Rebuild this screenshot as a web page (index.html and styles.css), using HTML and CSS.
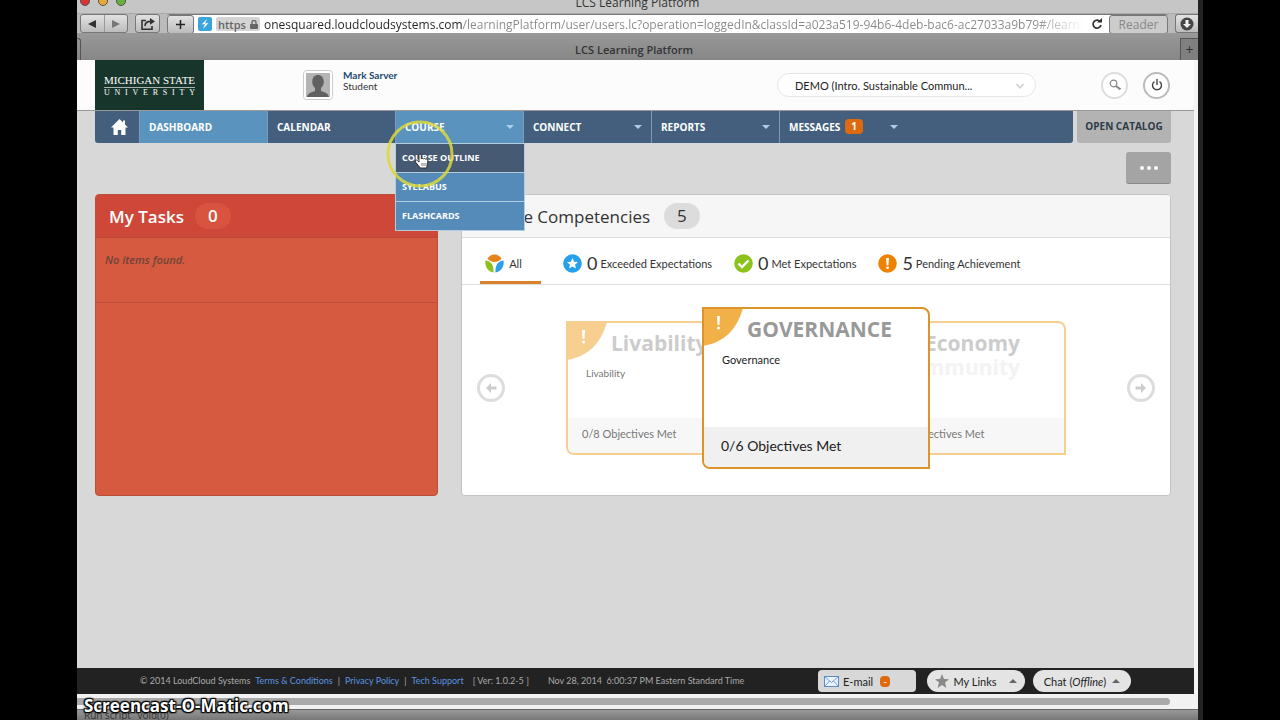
FILE: index.html
```
<!DOCTYPE html>
<html lang="en">
<head>
  <meta charset="UTF-8">
  <title>LCS Learning Platform</title>
  <link rel="stylesheet" href="styles.css">
</head>
<body>
  <div class="window">

    <!-- Browser chrome -->
    <div class="titlebar">
      <div class="lights">
        <span class="light red"></span>
        <span class="light yellow"></span>
        <span class="light green"></span>
      </div>
      <span class="window-title">LCS Learning Platform</span>
    </div>
    <div class="toolbar">
      <div class="history">
        <button aria-label="Back"><svg width="8" height="8" viewBox="0 0 8 8"><path d="M8 0v8L0 4z" fill="#333"/></svg></button>
        <button aria-label="Forward"><svg width="8" height="8" viewBox="0 0 8 8"><path d="M0 0v8l8-4z" fill="#777"/></svg></button>
      </div>
      <button class="tool-button" aria-label="Share">
        <svg width="14" height="12" viewBox="0 0 14 12" fill="none" stroke="#333" stroke-width="1.6"><path d="M5 2.500H1v8.700h10V8"/><path d="M4 8c0-3 2-4.600 6-4.600"/><path d="M9 0l5 3.400-5 3.400z" fill="#333" stroke="none"/></svg>
      </button>
      <div class="address">
        <button class="add-button" aria-label="Add bookmark"><svg width="11" height="11" viewBox="0 0 11 11"><path d="M5.500 1v9M1 5.500h9" stroke="#222" stroke-width="1.500"/></svg></button>
        <svg class="favicon" width="14" height="14" viewBox="0 0 14 14"><rect width="14" height="14" rx="2" fill="#3aa5dc"/><path d="M9 2L3.500 7.500 7 7 5 12l5.500-6L7 6.500z" fill="#fff"/></svg>
        <span class="secure">https
          <svg width="8" height="9" viewBox="0 0 8 9"><rect y="4" width="8" height="5" rx="1" fill="#666"/><path d="M2 4V2.500a2 2 0 0 1 4 0V4" fill="none" stroke="#666" stroke-width="1.300"/></svg>
        </span>
        <input class="url" type="text" aria-label="Address" value="onesquared.loudcloudsystems.com/learningPlatform/user/users.lc?operation=loggedIn&amp;classId=a023a519-94b6-4deb-bac6-ac27033a9b79#/learningPlatform">
        <button class="reload" aria-label="Reload"><svg width="12" height="12" viewBox="0 0 12 12"><path d="M9.500 4A4 4 0 1 0 10 7" fill="none" stroke="#333" stroke-width="1.700"/><path d="M6 4.600h5V0z" fill="#333"/></svg></button>
        <button class="reader">Reader</button>
      </div>
      <button class="downloads" aria-label="Downloads"><svg width="14" height="14" viewBox="0 0 14 14"><circle cx="7" cy="7" r="6.500" fill="#444"/><path d="M5.500 3h3v4H11l-4 4-4-4h2.500z" fill="#eee"/></svg></button>
    </div>
    <div class="tabbar">
      <span class="tab-edge"></span>
      <span class="tab-title">LCS Learning Platform</span>
      <button class="new-tab" aria-label="New tab">+</button>
    </div>

    <!-- Web page -->
    <div class="page">
      <header class="header">
        <a class="logo" href="#"><span class="logo-top">MICHIGAN STATE</span><span class="logo-bottom"><span>U</span><span>N</span><span>I</span><span>V</span><span>E</span><span>R</span><span>S</span><span>I</span><span>T</span><span>Y</span></span></a>
        <div class="user">
          <svg class="avatar" width="30" height="30" viewBox="0 0 30 30"><rect x=".5" y=".5" width="29" height="29" rx="3" fill="#fff" stroke="#ccc"/><rect x="3" y="3" width="24" height="24" fill="#b4b4b4"/><path d="M4 27c1-4 4-4.500 8-6v-3c-2-2-3-4-2.700-7C9.500 7 12 5 15 5s5.500 2 5.700 6c.3 3-.7 5-2.700 7v3c4 1.500 7 2 8 6z" fill="#606060"/></svg>
          <div class="user-text">
            <a class="user-name" href="#">Mark Sarver</a>
            <span class="user-role">Student</span>
          </div>
        </div>
        <div class="course-picker">
          <select aria-label="Course"><option>DEMO (Intro. Sustainable Commun...</option></select>
          <svg width="8" height="6" viewBox="0 0 8 6"><path d="M.5 1L4 5l3.500-4" fill="none" stroke="#ccc" stroke-width="1.200"/></svg>
        </div>
        <button class="round search" aria-label="Search"><svg width="12" height="12" viewBox="0 0 12 12" fill="none" stroke="#888"><circle cx="4.500" cy="4.500" r="3.300" stroke-width="1.200"/><path d="M7 7l4.500 3.500" stroke-width="2"/></svg></button>
        <button class="round power" aria-label="Log out"><svg width="12" height="12" viewBox="0 0 12 12" fill="none" stroke="#444" stroke-width="1.400"><path d="M3.500 2.500a4.500 4.500 0 1 0 5 0M6 0v6"/></svg></button>
      </header>

      <div class="nav-row">
        <nav class="nav">
          <a class="nav-home" href="#" aria-label="Home"><svg width="17" height="16" viewBox="0 0 17 16"><path d="M8.500 0L0 8.500h2.500V16h4.300v-5h3.400v5h4.300V8.500H17l-3-3V1.500h-2v2z" fill="#fff"/></svg></a>
          <a class="nav-item active" href="#">DASHBOARD</a>
          <a class="nav-item" href="#">CALENDAR</a>
          <div class="nav-item active has-menu">
            <a href="#">COURSE</a><span class="caret"></span>
            <div class="dropdown">
              <a class="hover" href="#">COURSE OUTLINE</a>
              <a href="#">SYLLABUS</a>
              <a href="#">FLASHCARDS</a>
            </div>
            <!-- Click ring and hand cursor -->
            <svg class="pointer" width="70" height="70" viewBox="0 0 70 70"><circle cx="35" cy="35" r="32" fill="none" stroke="#dcd83c" stroke-opacity=".85" stroke-width="3"/><path d="M34.500 48l-4-5c-1-1.500.7-2.500 1.800-1.500l1.700 1.500v-6.500c0-1.800 2.300-1.800 2.300 0V40c.5-1 2-.8 2.200 0 .6-.8 2-.6 2.200.3.700-.6 2-.2 2 .9V45l-1.200 4h-6z" fill="#fff" stroke="#222" stroke-width=".9"/><path d="M37 44v3M39 44v3M41 44v3" stroke="#222" stroke-width=".6"/></svg>
          </div>
          <a class="nav-item" href="#">CONNECT<span class="caret"></span></a>
          <a class="nav-item" href="#">REPORTS<span class="caret"></span></a>
          <a class="nav-item" href="#">MESSAGES<span class="badge">1</span><span class="caret"></span></a>
        </nav>
        <a class="catalog" href="#">OPEN CATALOG</a>
      </div>

      <main class="main">
        <div class="actions">
          <button class="more" aria-label="More"><i></i><i></i><i></i></button>
        </div>
        <div class="panels">
          <section class="panel tasks">
            <h2 class="panel-head">My Tasks <span class="count">0</span></h2>
            <p class="empty">No items found.</p>
          </section>

          <section class="panel competencies">
            <h2 class="panel-head">Course Competencies <span class="count">5</span></h2>
            <div class="filters">
              <button class="filter selected">
                <svg width="19" height="19" viewBox="0 0 19 19"><path d="M2.500 4.500C6-.8 13-.8 16.500 4.500 14 9 5 9 2.500 4.500z" fill="#e5841c"/><path d="M.5 6.500c5 .5 8.500 4 8 12C2.500 18-.5 12 .5 6.500z" fill="#8cc21c"/><path d="M18.500 6.500c-5 .5-8.500 4-8 12C16.500 18 19.500 12 18.500 6.500z" fill="#2c9fe8"/></svg>
                <span>All</span>
              </button>
              <button class="filter">
                <svg width="19" height="19" viewBox="0 0 19 19"><circle cx="9.500" cy="9.500" r="9.300" fill="#27a0ea"/><path d="M9.500 4l1.600 3.800 4 .3-3.100 2.600 1 3.900-3.500-2.100L6 14.600l1-3.900-3.100-2.600 4-.3z" fill="#fff"/></svg>
                <b>0</b><span>Exceeded Expectations</span>
              </button>
              <button class="filter">
                <svg width="19" height="19" viewBox="0 0 19 19"><circle cx="9.500" cy="9.500" r="9.300" fill="#8cc21c"/><path d="M4.500 9.500l3.500 3.500 6.500-6.500" fill="none" stroke="#fff" stroke-width="2.400"/></svg>
                <b>0</b><span>Met Expectations</span>
              </button>
              <button class="filter">
                <svg width="19" height="19" viewBox="0 0 19 19"><circle cx="9.500" cy="9.500" r="9.300" fill="#ee8100"/><path d="M8 4h3l-.6 7.500H8.600z" fill="#fff"/><circle cx="9.500" cy="13.800" r="1.400" fill="#fff"/></svg>
                <b>5</b><span>Pending Achievement</span>
              </button>
            </div>

            <div class="carousel">
              <button class="arrow" aria-label="Previous"><svg width="28" height="28" viewBox="0 0 28 28"><circle cx="14" cy="14" r="12.500" fill="none" stroke="#ddd" stroke-width="3"/><path d="M14 9v3.500h5.500v3H14V19l-5-5z" fill="#ccc"/></svg></button>
              <div class="cards">
                <article class="card side">
                  <svg class="corner" width="40" height="38" viewBox="0 0 40 38"><path d="M0 0h40Q31 33 0 38z" fill="#f2b048"/><path d="M15 8h3l-.6 9h-1.800z" fill="#fff"/><circle cx="16.500" cy="20" r="1.500" fill="#fff"/></svg>
                  <h3>Livability</h3>
                  <p>Livability</p>
                  <footer>0/8 Objectives Met</footer>
                </article>
                <article class="card front">
                  <svg class="corner" width="40" height="38" viewBox="0 0 40 38"><path d="M0 0h40Q31 33 0 38z" fill="#f2b048"/><path d="M14 8h3l-.6 9h-1.800z" fill="#fff"/><circle cx="15.500" cy="20" r="1.500" fill="#fff"/></svg>
                  <h3>GOVERNANCE</h3>
                  <p>Governance</p>
                  <footer>0/6 Objectives Met</footer>
                </article>
                <article class="card side last">
                  <h3>Economy<span class="ghost">Community</span></h3>
                  <footer>0/5 Objectives Met</footer>
                </article>
              </div>
              <button class="arrow" aria-label="Next"><svg width="28" height="28" viewBox="0 0 28 28"><circle cx="14" cy="14" r="12.500" fill="none" stroke="#ddd" stroke-width="3"/><path d="M14 9v3.500H8.500v3H14V19l5-5z" fill="#ccc"/></svg></button>
            </div>
          </section>
        </div>
      </main>

      <footer class="footer">
        <div class="legal">
          <span>© 2014 LoudCloud Systems</span>
          <a href="#">Terms &amp; Conditions</a><span>|</span><a href="#">Privacy Policy</a><span>|</span><a href="#">Tech Support</a>
          <span class="version">[ Ver: 1.0.2-5 ]</span>
          <span class="clock">Nov 28, 2014&nbsp; 6:00:37 PM Eastern Standard Time</span>
        </div>
        <button class="dock email">
          <svg width="15" height="11" viewBox="0 0 15 11"><rect x=".5" y=".5" width="14" height="10" fill="#e8f2fc" stroke="#5b8cc8"/><path d="M.5.500L7.500 6.500l7-6M.5 10.500l5-5.500M14.500 10.500l-5-5.500" fill="none" stroke="#5b8cc8" stroke-width=".8"/></svg>
          E-mail<span class="badge">-</span>
        </button>
        <button class="dock">
          <svg width="14" height="14" viewBox="0 0 14 14"><path d="M7 0l2 5 5 .3-4 3.300L11.400 14 7 11l-4.400 3L4 8.600 0 5.300 5 5z" fill="#888"/></svg>
          My Links<span class="up"></span>
        </button>
        <button class="dock chat"><span>Chat (<em>Offline</em>)</span><span class="up"></span></button>
      </footer>
    </div>

    <div class="scrollbar"><span></span></div>
    <div class="statusbar">Run script "void(0)"</div>
    <span class="watermark">Screencast-O-Matic.com</span>
  </div>
</body>
</html>
```
FILE: styles.css
```
* {
  box-sizing: border-box;
}
body {
  margin: 0;
  padding: 0 77px;
  background: #000;
  font-family: "Open Sans", "Noto Sans", sans-serif;
  font-size: 11px;
  color: #333;
}
button, select, input {
  margin: 0;
  padding: 0;
  border: 0;
  background: none;
  font: inherit;
  color: inherit;
}
button {
  display: flex;
  align-items: center;
  justify-content: center;
}
a {
  color: inherit;
  text-decoration: none;
}
h2, h3, p {
  margin: 0;
}
svg {
  flex-shrink: 0;
}

/* Browser window */
.window {
  position: relative;
  display: flex;
  flex-direction: column;
  min-height: 100vh;
  background: #d8d8d8;
  border-right: 5px solid #222;
}
.titlebar {
  display: flex;
  justify-content: center;
  height: 14px;
  overflow: hidden;
  background: #c6c6c6;
  border-bottom: 1px solid #aaa;
}
.lights {
  position: absolute;
  top: -4px;
  left: 3px;
  display: flex;
  gap: 8px;
}
.light {
  width: 10px;
  height: 10px;
  border: 1px solid #555;
  border-radius: 50%;
}
.red { background: #d8343a; }
.yellow { background: #e8a838; }
.green { background: #6aae40; }
.window-title {
  font-size: 12px;
  line-height: 6px;
}
.toolbar {
  display: flex;
  gap: 7px;
  height: 19px;
  padding-left: 3px;
  background: #bbb;
  overflow: hidden;
}
.history, .tool-button, .add-button, .reader, .downloads {
  border: 1px solid #777;
  border-radius: 3px;
  background: linear-gradient(#e2e2e2, #bcbcbc);
}
.history {
  display: flex;
  width: 48px;
}
.history button {
  flex: 1;
}
.history button + button {
  border-left: 1px solid #999;
}
.tool-button {
  width: 25px;
}
.address {
  flex: 1;
  display: flex;
  align-items: center;
  background: #fff;
  border-top: 1px solid #777;
  border-radius: 3px;
}
.add-button {
  width: 27px;
  height: 19px;
}
.favicon {
  margin: 0 4px;
}
.secure {
  display: flex;
  align-items: center;
  gap: 4px;
  height: 14px;
  margin-right: 4px;
  padding: 0 2px;
  border-radius: 2px;
  background: #d4d4d4;
  color: #666;
  font-weight: 600;
}
.url {
  flex: 1;
  min-width: 0;
  font-size: 12px;
  color: transparent;
  background: linear-gradient(to right, #222 199px, #888 199px, #888 770px, #fff 820px);
  -webkit-background-clip: text;
  background-clip: text;
}
.reload {
  width: 24px;
}
.reader {
  width: 59px;
  height: 19px;
  font-size: 12px;
  color: #888;
  background: #ccc;
}
.downloads {
  width: 23px;
  border-right: 0;
  border-radius: 3px 0 0 3px;
}
.tabbar {
  display: flex;
  align-items: center;
  justify-content: space-between;
  height: 27px;
  padding-top: 5px;
  background: linear-gradient(#999, #868686);
}
.tab-edge, .new-tab {
  width: 18px;
  height: 100%;
}
.tab-edge {
  width: 4px;
  margin-right: 7px;
  border: solid #555;
  border-width: 1px 1px 0 0;
  border-radius: 0 3px 0 0;
}
.tab-title {
  font-weight: 600;
}
.new-tab {
  border: solid #555;
  border-width: 1px 0 0 1px;
  background: #808080;
  font-size: 14px;
}

/* Page header */
.page {
  flex: 1;
  display: flex;
  flex-direction: column;
  border-right: 4px solid #f4f4f4;
  font-family: Lato, "Open Sans", sans-serif;
}
.header {
  display: flex;
  align-items: center;
  height: 51px;
  padding: 0 24px 0 18px;
  background: #fcfcfc;
  border-bottom: 1px solid #999;
}
.logo {
  display: flex;
  flex-direction: column;
  justify-content: center;
  align-self: stretch;
  width: 109px;
  padding: 0 9px;
  background: #18352b;
  color: #fff;
  font-family: "Liberation Serif", serif;
}
.logo-top {
  border-bottom: 1px solid #a8b4ae;
  font-size: 11px;
  line-height: 14px;
  white-space: nowrap;
}
.logo-bottom {
  display: flex;
  justify-content: space-between;
  font-size: 8px;
  line-height: 10px;
}
.user {
  display: flex;
  gap: 10px;
  margin-left: 99px;
}
.user-text {
  display: flex;
  flex-direction: column;
  font-size: 10px;
  line-height: 11px;
}
.user-name {
  font-weight: 700;
  color: #234a70;
}
.course-picker {
  position: relative;
  width: 259px;
  margin: 0 65px 0 auto;
}
.course-picker select {
  appearance: none;
  width: 100%;
  height: 24px;
  padding: 0 34px 0 17px;
  border: 1px solid #e6e6e6;
  border-radius: 12px;
  background: #fff;
  color: #222;
}
.course-picker svg {
  position: absolute;
  top: 10px;
  right: 12px;
}
.round {
  width: 27px;
  height: 27px;
  border: 2px solid #ddd;
  border-radius: 50%;
  background: #fff;
}
.power {
  margin-left: 15px;
  border-color: #bbb;
}

/* Navigation */
.nav-row {
  display: flex;
  gap: 4px;
  height: 32px;
  padding: 0 23px 0 18px;
  font-family: "Open Sans", sans-serif;
  font-size: 10px;
  font-weight: 700;
}
.nav {
  flex: 1;
  display: flex;
  background: #435f7d;
  border-radius: 0 0 3px 3px;
  color: #fff;
}
.nav-home {
  display: flex;
  align-items: center;
  justify-content: center;
  width: 44px;
  padding-left: 4px;
}
.nav-item {
  position: relative;
  display: flex;
  align-items: center;
  width: 128px;
  padding: 0 9px 1px;
  border-left: 1px solid #7d9ab8;
}
.nav-item.active {
  background: #5a93be;
}
.caret {
  margin-left: auto;
  border: 4px solid transparent;
  border-top-color: #a9cdea;
  border-bottom: 0;
}
.badge {
  margin-left: 5px;
  padding: 0 6px;
  border-radius: 4px;
  background: #de6a10;
  color: #fff;
  font-size: 10px;
  line-height: 15px;
}
.dropdown {
  position: absolute;
  top: 32px;
  left: -1px;
  z-index: 5;
  width: 130px;
  border: 1px solid #b4cce0;
  font-size: 9px;
}
.dropdown a {
  display: block;
  padding: 0 6px;
  background: #548bb8;
  line-height: 28px;
}
.dropdown a + a {
  border-top: 1px solid #b4cce0;
}
.dropdown .hover {
  background: #475a74;
}
.pointer {
  position: absolute;
  top: 8px;
  left: -11px;
  z-index: 6;
}
.catalog {
  display: flex;
  align-items: center;
  justify-content: center;
  width: 94px;
  padding-bottom: 2px;
  border-radius: 0 0 3px 3px;
  background: #b3b3b3;
  color: #2c3b47;
}

/* Content */
.main {
  flex: 1;
  padding: 9px 23px 0 18px;
}
.actions {
  display: flex;
  justify-content: flex-end;
}
.more {
  gap: 3px;
  width: 45px;
  height: 32px;
  border-radius: 3px;
  border-bottom: 1px solid #888;
  background: #a4a4a4;
}
.more i {
  width: 4px;
  height: 4px;
  border-radius: 50%;
  background: #fff;
}
.panels {
  display: grid;
  grid-template-columns: 343fr 710fr;
  gap: 23px;
  margin-top: 10px;
}
.panel {
  min-height: 301px;
  border: 1px solid #c4c4c4;
  border-radius: 4px;
  background: #fff;
}
.panel-head {
  display: flex;
  align-items: center;
  height: 43px;
  padding: 0 13px;
  border-bottom: 1px solid #ddd;
  border-radius: 3px 3px 0 0;
  background: #f6f6f6;
  font-family: "Open Sans", sans-serif;
  font-size: 17px;
  font-weight: 400;
}
.count {
  margin-left: 14px;
  padding: 0 13px;
  border-radius: 13px;
  background: #dcdcdc;
  line-height: 26px;
}
.competencies .panel-head {
  padding-left: 15px;
}
.tasks {
  border-color: #b8503a;
  background: #d65a40;
}
.tasks .panel-head {
  border-color: #b94735;
  background: #cf4738;
  color: #fff;
  font-weight: 600;
}
.tasks .count {
  margin-left: 11px;
  background: #d85440;
}
.empty {
  height: 65px;
  padding: 14px 9px;
  border-bottom: 1px solid #be4c38;
  color: #6e4438;
  font-family: "Open Sans", sans-serif;
  font-style: italic;
  font-weight: 600;
}
.filters {
  display: flex;
  gap: 22px;
  height: 47px;
  padding: 0 18px;
  border-bottom: 1px solid #ddd;
}
.filter {
  gap: 3px;
  padding-top: 7px;
  border-bottom: 3px solid transparent;
}
.filter svg {
  margin-right: 2px;
}
.filter b {
  font-size: 18px;
  font-weight: 400;
}
.filter.selected {
  width: 61px;
  padding-right: 14px;
  border-color: #d9822b;
}
.carousel {
  display: flex;
  align-items: center;
  justify-content: space-between;
  padding: 22px 15px 26px;
}
.cards {
  display: flex;
  align-items: center;
}
.card {
  position: relative;
  display: flex;
  flex-direction: column;
  width: 192px;
  height: 134px;
  border: 2px solid #f5cf90;
  border-radius: 0 8px 0 8px;
  background: #fff;
  overflow: hidden;
  color: #777;
}
.corner {
  position: absolute;
  top: -1px;
  left: -1px;
}
.side .corner {
  opacity: .6;
}
.card h3 {
  padding: 4px 0 0 43px;
  color: #ccc;
  font-family: "Open Sans", sans-serif;
  font-size: 21px;
  line-height: 32px;
}
.card p {
  flex: 1;
  padding: 8px 18px;
  font-size: 10px;
}
.card footer {
  height: 35px;
  margin-top: auto;
  padding: 0 14px;
  background: #f7f7f7;
  line-height: 32px;
}
.front {
  z-index: 1;
  width: 228px;
  height: 162px;
  margin: 0 -56px;
  border-color: #dc9428;
  color: #222;
}
.front h3 {
  color: #999;
}
.front p {
  font-size: 11px;
}
.front footer {
  height: 40px;
  padding: 0 17px;
  background: #f0f0f0;
  font-size: 14px;
  line-height: 38px;
}
.last h3 {
  padding: 4px 44px 0 0;
  text-align: right;
}
.ghost {
  display: block;
  color: #f3f3f3;
  line-height: 16px;
}
.arrow {
  border-radius: 50%;
}

/* Bottom bar */
.footer {
  display: flex;
  align-items: center;
  height: 26px;
  padding: 0 63px;
  background: #222;
}
.legal {
  display: flex;
  gap: 5px;
  margin-right: auto;
  padding-bottom: 2px;
  color: #aaa;
  font-size: 9px;
  white-space: nowrap;
}
.legal a {
  color: #5a94e0;
}
.version {
  margin-left: 4px;
}
.clock {
  margin-left: 14px;
}
.dock {
  gap: 4px;
  width: 98px;
  height: 22px;
  margin-left: 8px;
  border-radius: 11px;
  background: #e4e4e4;
  color: #222;
}
.email {
  justify-content: flex-start;
  padding: 0 6px;
  border-radius: 4px;
  background: #d8d8d8;
  margin-right: 3px;
}
.email .badge {
  margin-left: 3px;
  padding: 0 3px;
  line-height: 11px;
}
.up {
  margin-left: 8px;
  border: 4px solid transparent;
  border-bottom-color: #666;
  border-top: 0;
}
.chat .up {
  margin-left: 2px;
}
.scrollbar {
  display: flex;
  align-items: center;
  height: 15px;
  padding-right: 28px;
  background: #f2f2f2;
}
.scrollbar span {
  flex: 1;
  height: 7px;
  border-radius: 0 4px 4px 0;
  background: #aaa;
}
.statusbar {
  height: 11px;
  overflow: hidden;
  padding-left: 7px;
  border-top: 1px solid #666;
  background: linear-gradient(#999, #777);
  font-size: 10px;
  line-height: 11px;
}
.watermark {
  position: absolute;
  bottom: 3px;
  left: 7px;
  color: #fff;
  font-size: 17px;
  font-weight: 700;
  line-height: 22px;
  text-shadow: 1px 1px 1px #000, -1px -1px 1px #000, 1px -1px 1px #000, -1px 1px 1px #000, 0 0 3px #000;
}
```
